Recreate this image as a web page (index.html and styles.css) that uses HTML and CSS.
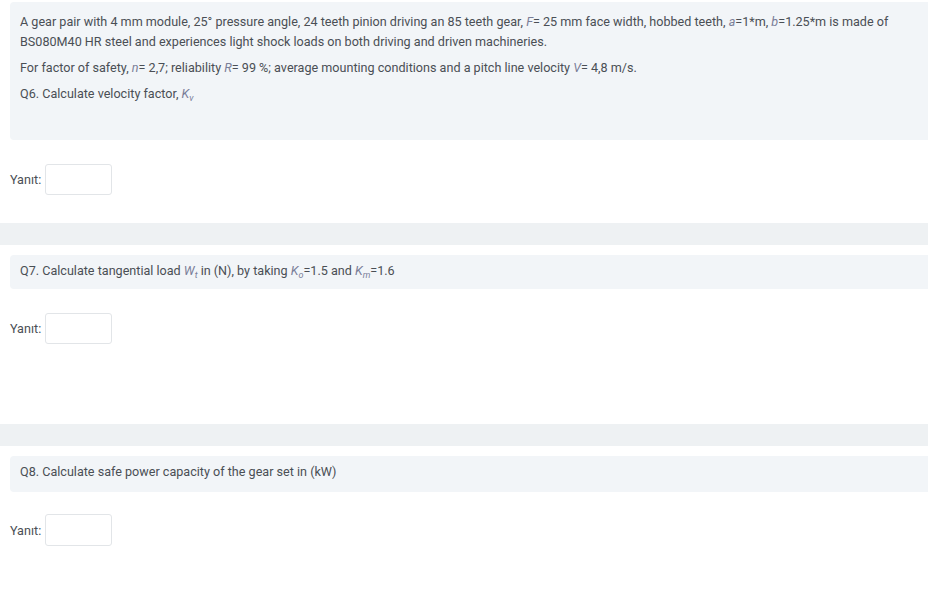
FILE: index.html
```html
<!DOCTYPE html>
<html>
<head>
<meta charset="utf-8">
<link rel="stylesheet" href="styles.css">
</head>
<body>
<div class="page">
  <section class="question q6">
    <div class="qtext">
      <p>A gear pair with 4 mm module, 25° pressure angle, 24 teeth pinion driving an 85 teeth gear, <i class="v">F</i>= 25 mm face width, hobbed teeth, <i class="v">a</i>=1*m, <i class="v">b</i>=1.25*m is made of BS080M40 HR steel and experiences light shock loads on both driving and driven machineries.</p>
      <p>For factor of safety, <i class="v">n</i>= 2,7; reliability <i class="v">R</i>= 99 %; average mounting conditions and a pitch line velocity <i class="v">V</i>= 4,8 m/s.</p>
      <p>Q6. Calculate velocity factor, <i class="v">K<sub>v</sub></i></p>
    </div>
    <div class="answer a6"><label>Yanıt:</label><input type="text"></div>
  </section>
  <div class="band b1"></div>
  <section class="question q7">
    <div class="qtext short">
      <p>Q7. Calculate tangential load <i class="v">W<sub>t</sub></i> in (N), by taking <i class="v">K<sub>o</sub></i>=1.5 and <i class="v">K<sub>m</sub></i>=1.6</p>
    </div>
    <div class="answer a7"><label>Yanıt:</label><input type="text"></div>
  </section>
  <div class="band b2"></div>
  <section class="question q8">
    <div class="qtext short q8text">
      <p>Q8. Calculate safe power capacity of the gear set in (kW)</p>
    </div>
    <div class="answer a8"><label>Yanıt:</label><input type="text"></div>
  </section>
</div>
</body>
</html>
```

FILE: styles.css
```css
html, body {
  margin: 0;
  padding: 0;
  background: #ffffff;
}
body {
  font-family: Roboto, "Liberation Sans", sans-serif;
  font-size: 12.6px;
  color: #4a4f55;
  width: 928px;
  overflow: hidden;
}
.page {
  display: flex;
  flex-direction: column;
}
.question {
  display: flex;
  flex-direction: column;
  padding-left: 10px;
}
.qtext {
  background: #f2f5f8;
  border-radius: 4px 0 0 4px;
  padding: 10px 10px 36px 10px;
  line-height: 20px;
}
.qtext p {
  margin: 0 0 6px 0;
}
.qtext p:last-child {
  margin-bottom: 0;
}
.q6 .qtext {
  margin-top: 2px;
}
.qtext.short {
  padding: 6px 10px 8px 10px;
}
.qtext.q8text {
  padding: 6px 10px 10px 10px;
}
.v {
  font-style: italic;
  color: #7a7e98;
}
.v sub {
  font-size: 9px;
  vertical-align: -3px;
  line-height: 0;
}
.answer {
  display: flex;
  align-items: center;
  gap: 4px;
}
.answer label {
  color: #4a4f55;
}
.answer input {
  width: 67px;
  height: 31px;
  box-sizing: border-box;
  border: 1px solid #e2e5e8;
  border-radius: 3px;
  background: #fff;
  margin: 0;
  padding: 0 6px;
}
.a6 { margin-top: 24px; }
.a7 { margin-top: 24px; }
.a8 { margin-top: 22px; }
.a8 input { height: 32px; }
.band {
  height: 22px;
  background: #eef1f3;
}
.b1 { margin-top: 28px; margin-bottom: 10px; }
.b2 { margin-top: 80px; margin-bottom: 10px; }
```
